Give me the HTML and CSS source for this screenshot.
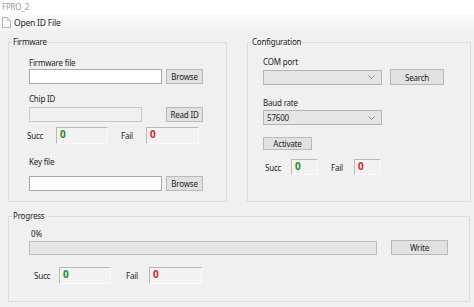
FILE: index.html
```html
<!DOCTYPE html>
<html lang="en">
<head>
    <meta charset="UTF-8">
    <meta name="viewport" content="width=device-width, initial-scale=1.0">
    <title>FPRO_2</title>
    <link rel="stylesheet" href="styles.css">
</head>
<body>
    <div class="titlebar">FPRO_2</div>

    <div class="menubar">
        <span class="menu-item">
            <svg class="file-icon" width="9" height="11" viewBox="0 0 9 11">
                <path d="M0.5 0.5 H5.5 L8.5 3.5 V10.5 H0.5 Z" fill="#fbfbfb" stroke="#b5b5b5"/>
                <path d="M5.5 0.5 V3.5 H8.5" fill="none" stroke="#c8c8c8"/>
            </svg>
            Open ID File
        </span>
    </div>

    <div class="main">
        <div class="top-row">
            <fieldset class="group group-firmware">
                <legend>Firmware</legend>
                <div class="group-body fw-body">
                    <div class="label">Firmware file</div>
                    <div class="row fw-row">
                        <input type="text" class="text-input wide">
                        <button class="btn btn-browse">Browse</button>
                    </div>

                    <div class="label gap-9">Chip ID</div>
                    <div class="row fw-row gap-2">
                        <input type="text" class="text-input narrow" disabled>
                        <button class="btn btn-browse">Read ID</button>
                    </div>

                    <div class="stats stats-fw">
                        <span>Succ</span>
                        <span class="stat-box ok">0</span>
                        <span class="fail-label">Fail</span>
                        <span class="stat-box bad">0</span>
                    </div>

                    <div class="label key-label">Key file</div>
                    <div class="row fw-row key-row">
                        <input type="text" class="text-input wide">
                        <button class="btn btn-browse">Browse</button>
                    </div>
                </div>
            </fieldset>

            <fieldset class="group group-config">
                <legend>Configuration</legend>
                <div class="group-body cfg-body">
                    <div class="label">COM port</div>
                    <div class="row cfg-row">
                        <div class="combo"><span></span><svg width="7" height="4" viewBox="0 0 7 4"><polyline points="0.5,0.5 3.5,3.5 6.5,0.5" fill="none" stroke="#8a8a8a"/></svg></div>
                        <button class="btn btn-search">Search</button>
                    </div>

                    <div class="label gap-12">Baud rate</div>
                    <div class="combo baud"><span>57600</span><svg width="7" height="4" viewBox="0 0 7 4"><polyline points="0.5,0.5 3.5,3.5 6.5,0.5" fill="none" stroke="#8a8a8a"/></svg></div>

                    <button class="btn btn-activate">Activate</button>

                    <div class="stats stats-cfg">
                        <span>Succ</span>
                        <span class="stat-box ok">0</span>
                        <span class="fail-label">Fail</span>
                        <span class="stat-box bad">0</span>
                    </div>
                </div>
            </fieldset>
        </div>

        <fieldset class="group group-progress">
            <legend>Progress</legend>
            <div class="group-body prog-body">
                <div class="label percent">0%</div>
                <div class="row prog-row">
                    <div class="progress-bar"><div class="progress-fill" style="width: 0%"></div></div>
                    <button class="btn btn-write">Write</button>
                </div>

                <div class="stats stats-prog">
                    <span>Succ</span>
                    <span class="stat-box ok">0</span>
                    <span class="fail-label">Fail</span>
                    <span class="stat-box bad">0</span>
                </div>
            </div>
        </fieldset>
    </div>
</body>
</html>
```

FILE: styles.css
```css
body {
    font-family: 'Noto Sans', 'Open Sans', sans-serif;
    font-size: 8px;
    letter-spacing: -0.2px;
    color: #1e1e1e;
    background-color: #f0f0f0;
    margin: 0;
    width: 474px;
    height: 307px;
    overflow: hidden;
}

.titlebar {
    height: 14px;
    line-height: 14px;
    padding-left: 2px;
    background: #ffffff;
    color: #9a9a9a;
}

.menubar {
    height: 17px;
    display: flex;
    align-items: center;
    font-size: 8.5px;
    background: linear-gradient(#fbfbfb, #f2f2f2);
}

.menu-item {
    display: flex;
    align-items: center;
    gap: 3px;
    padding-left: 2px;
}

.main {
    padding: 5px 0 0 8px;
}

.top-row {
    display: flex;
    gap: 20px;
}

.group {
    margin: 0;
    padding: 0;
    min-width: 0;
    border: 1px solid #dcdcdc;
}

.group legend {
    margin-left: 3px;
    padding: 0 1px;
    line-height: 12px;
}

.group-firmware {
    width: 219px;
    box-sizing: border-box;
}

.group-config {
    width: 224px;
    box-sizing: border-box;
}

.group-progress {
    width: 462px;
    box-sizing: border-box;
    margin-top: 8px;
}

.label {
    line-height: 12px;
    height: 12px;
}

.gap-9 { margin-top: 9px; }
.gap-12 { margin-top: 12px; }
.gap-2 { margin-top: 2px; }

.row {
    display: flex;
    justify-content: space-between;
    align-items: center;
}

/* firmware */
.fw-body {
    padding: 9px 0 10px 20px;
}

.fw-row {
    width: 174px;
}

.key-label {
    margin-top: 12px;
}

.key-row {
    margin-top: 8px;
}

.text-input {
    box-sizing: border-box;
    height: 15px;
    margin: 0;
    border: 1px solid #a9a9a9;
    background: #ffffff;
    padding: 0 2px;
    font: inherit;
    outline: none;
}

.text-input.wide { width: 133px; }

.text-input.narrow {
    width: 113px;
    background: #f0f0f0;
    border-color: #c8c8c8;
}

.btn {
    box-sizing: border-box;
    margin: 0;
    padding: 0;
    font: inherit;
    letter-spacing: inherit;
    color: #1e1e1e;
    background: #e1e1e1;
    border: 1px solid #b9b9b9;
    border-radius: 0;
    line-height: 13px;
}

.btn-browse {
    width: 37px;
    height: 15px;
}

/* configuration */
.cfg-body {
    padding: 8px 0 0 15px;
}

.cfg-row {
    width: 181px;
    margin-top: 1px;
}

.combo {
    box-sizing: border-box;
    width: 119px;
    height: 15px;
    display: flex;
    align-items: center;
    justify-content: space-between;
    padding: 0 6px 0 3px;
    background: #e5e5e5;
    border: 1px solid #b4b4b4;
}

.combo.baud {
    margin-top: 1px;
}

.btn-search {
    width: 54px;
    height: 16px;
}

.btn-activate {
    display: block;
    width: 49px;
    height: 13px;
    line-height: 11px;
    margin-top: 12px;
}

/* stats rows */
.stats {
    display: grid;
    align-items: center;
}

.fail-label {
    padding-left: 13px;
}

.stat-box {
    box-sizing: border-box;
    height: 17px;
    padding-left: 3px;
    line-height: 13px;
    font-size: 10px;
    font-weight: bold;
    background: #f2f2f2;
    border-top: 1px solid #b9b9b9;
    border-left: 1px solid #b9b9b9;
    border-right: 1px solid #fbfbfb;
    border-bottom: 1px solid #fbfbfb;
}

.stat-box.ok { color: #1d8a1d; }
.stat-box.bad { color: #e0202c; }

.stats-fw {
    margin: 5px 0 0 -2px;
    grid-template-columns: 29px 52px 38px 53px;
}

.stats-cfg {
    margin: 9px 0 0 2px;
    grid-template-columns: 26px 27px 36px 27px;
}

.stats-cfg .stat-box {
    height: 16px;
}

.stats-prog {
    margin: 12px 0 0 5px;
    grid-template-columns: 25px 52px 38px 53px;
}

.stats-prog .fail-label {
    padding-left: 15px;
}

/* progress */
.prog-body {
    padding: 6px 0 17px 20px;
}

.percent {
    margin-left: 2px;
}

.prog-row {
    width: 419px;
}

.progress-bar {
    box-sizing: border-box;
    width: 348px;
    height: 14px;
    background: #e6e6e6;
    border: 1px solid #bcbcbc;
}

.progress-fill {
    height: 100%;
    background: #06b025;
}

.btn-write {
    width: 57px;
    height: 15px;
}
```
